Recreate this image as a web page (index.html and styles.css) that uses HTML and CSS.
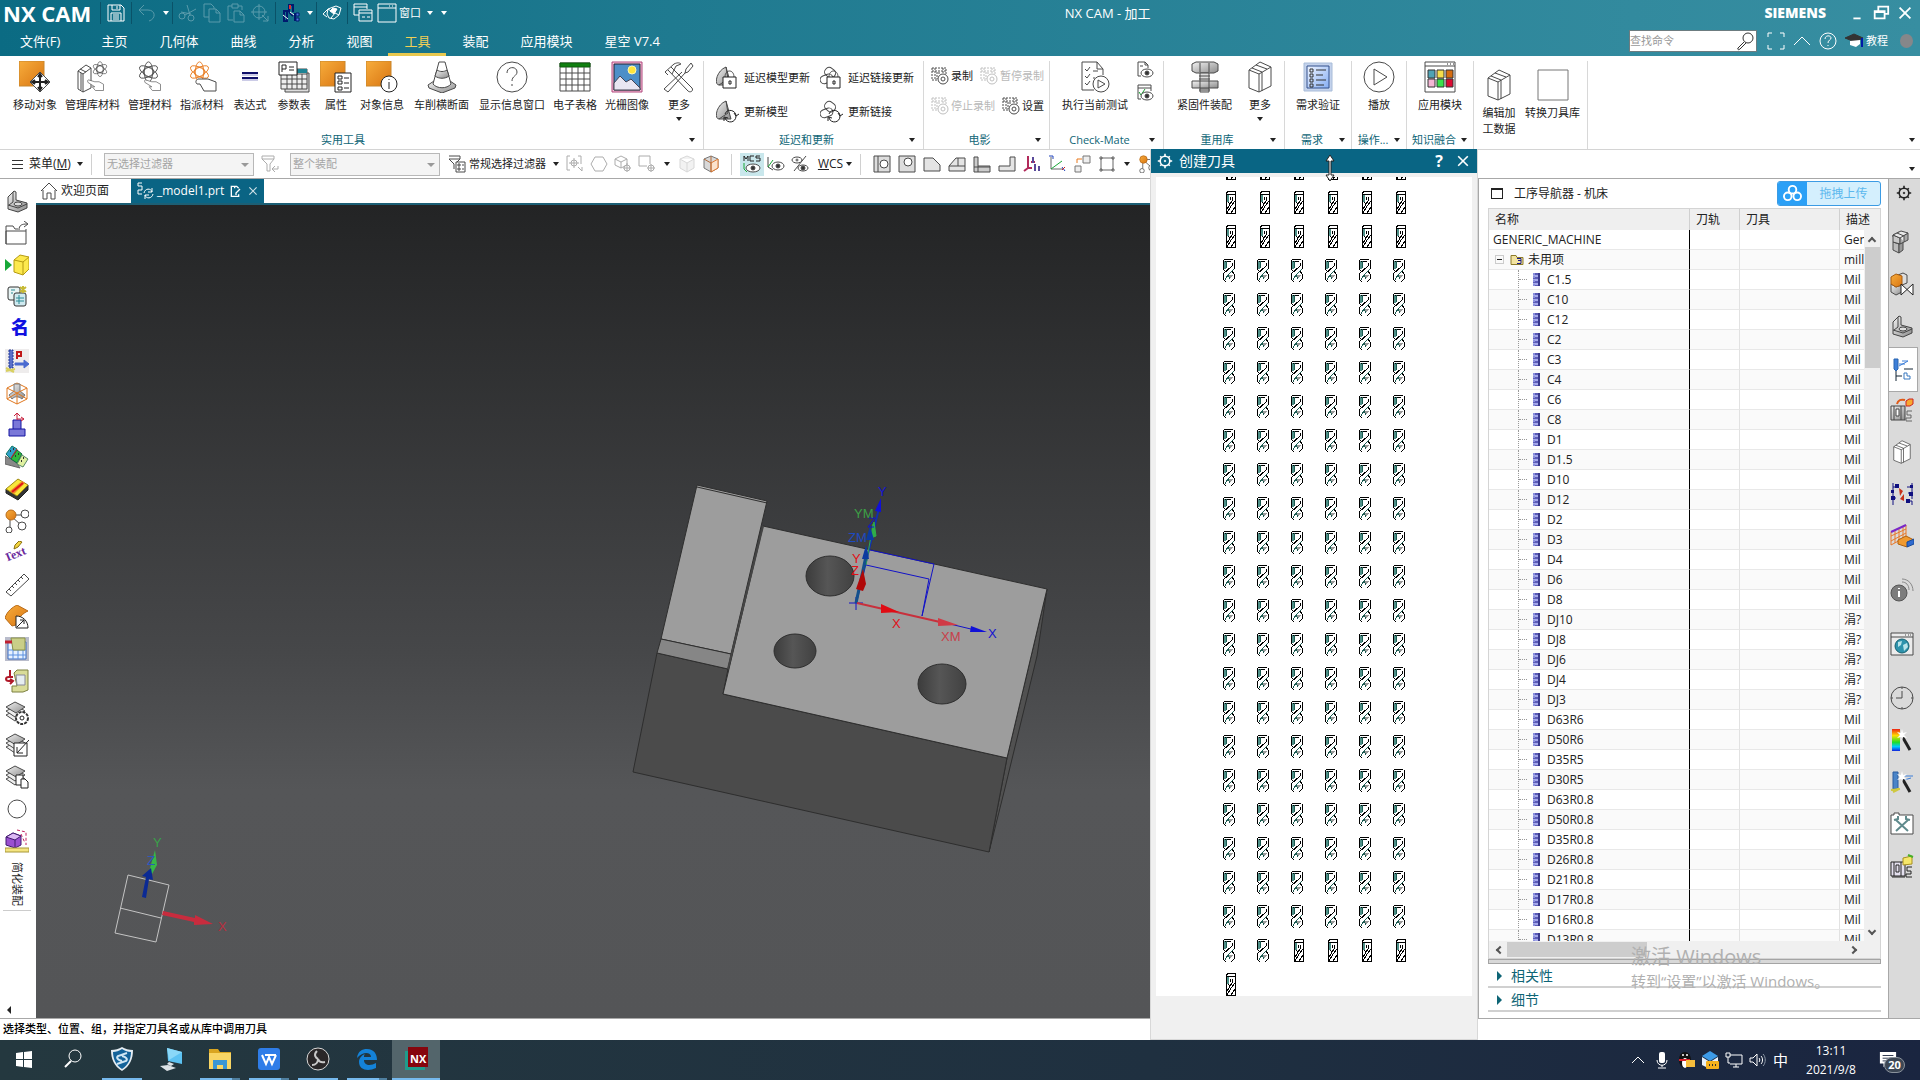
FILE: index.html
```
<!DOCTYPE html>
<html lang="zh-CN">
<head>
    <meta charset="UTF-8">
    <meta name="viewport" content="width=device-width, initial-scale=1.0">
    <title>NX CAM - 加工</title>
    <link rel="stylesheet" href="styles.css">
</head>
<body>
    <!-- icon set -->
    <svg class="sprite" aria-hidden="true">
        <defs>
            <linearGradient id="orange" x1="0" y1="0" x2="1" y2="1"><stop offset="0" stop-color="#f7ad3c"/><stop offset="1" stop-color="#d97512"/></linearGradient>
            <linearGradient id="steel" x1="0" y1="0" x2="1" y2="1"><stop offset="0" stop-color="#f2f2f2"/><stop offset="1" stop-color="#8c8c8c"/></linearGradient>
            <linearGradient id="bluebox" x1="0" y1="0" x2="1" y2="1"><stop offset="0" stop-color="#eef4ff"/><stop offset="1" stop-color="#86aef2"/></linearGradient>
            <linearGradient id="rainbow" x1="0" y1="0" x2="0" y2="1"><stop offset="0" stop-color="#e21"/><stop offset=".3" stop-color="#fd0"/><stop offset=".6" stop-color="#2d2"/><stop offset=".8" stop-color="#0cf"/><stop offset="1" stop-color="#12d"/></linearGradient>
        </defs>

        <symbol id="save" viewBox="0 0 20 20"><path d="M2 2h13l3 3v13H2zM6 2v5h8V2M11 3v3M5 18v-8h10v8M7 12h6M7 14h6M7 16h6"/></symbol>
        <symbol id="undo" viewBox="0 0 20 20"><path d="M7 2L2 7l5 5M2 7h9c8 0 8 9 1 11"/></symbol>
        <symbol id="cut" viewBox="0 0 20 20"><path d="M9 2l3 10M18 6L7 12M3 9l10 2"/><circle cx="4" cy="13" r="3"/><circle cx="13" cy="15" r="3"/></symbol>
        <symbol id="copy" viewBox="0 0 20 20"><path d="M7 14H2V1h7l3 3v2M7 6h7l4 4v9H7zM14 6v4h4"/></symbol>
        <symbol id="paste" viewBox="0 0 20 20"><path d="M7 17H2V3h4M12 3h4v4M6 1h6v4H6zM8 8h6l4 4v7H8zM14 8v4h4"/></symbol>
        <symbol id="target" viewBox="0 0 20 20"><circle cx="9" cy="9" r="6"/><path d="M9 1v16M1 9h16M12 12l6 6M18 13v5h-5"/></symbol>
        <symbol id="tree-tool" viewBox="0 0 20 20"><path d="M8 9V2h4v7M3 8v10h3V8zM14 10v8M8 9l4 4" stroke="#001a6e" stroke-width="2"/><path d="M8 2h2v4H8z" fill="#e03030" stroke="none"/><path d="M2 12l5 4M9 9l4 3" stroke="#fff"/><path d="M15 10h3v3h-3zM15 15h3v3h-3z" fill="#4f7be0" stroke="#001a6e"/></symbol>
        <symbol id="touch" viewBox="0 0 20 20"><path d="M1 11l5-5 3 2M6 6l8-3 5 2-2 7-5 4-5-1-2-4z"/><path d="M8 8l3-3 4 1-3 5z" fill="#fff"/><path d="M1 11l4 3M9 15l4-5 4 2"/></symbol>
        <symbol id="cascade" viewBox="0 0 20 20"><path d="M6 12H1V1h13v5M1 4h13M6 7h13v11H6zM6 10h13M9 14h3M14 14h3"/></symbol>
        <symbol id="window" viewBox="0 0 20 20"><path d="M1 1h18v18H1zM1 5h18M12 3h1M15 3h1"/></symbol>
        <symbol id="mag" viewBox="0 0 20 20"><circle cx="12" cy="7" r="5"/><path d="M8 11l-6 6c-1 2 1 2 2 1l6-6"/></symbol>
        <symbol id="fullscreen" viewBox="0 0 20 20"><path d="M2 6V2h4M14 2h4v4M18 14v4h-4M6 18H2v-4"/></symbol>
        <symbol id="caret-up" viewBox="0 0 20 20"><path d="M2 14l8-8 8 8"/></symbol>
        <symbol id="help" viewBox="0 0 20 20"><circle cx="10" cy="10" r="8"/><path d="M7 8c0-4 6-4 6-1 0 2-3 2-3 5M10 14v1"/></symbol>
        <symbol id="hat" viewBox="0 0 20 20"><path d="M1 7l9-4 9 4-8 4z" fill="#333" stroke="#333"/><path d="M6 10v4l6 2 4-3V9z" fill="#fff" stroke="none"/><path d="M18 7v9" stroke="#0018a8" stroke-width="2"/></symbol>
        <symbol id="min" viewBox="0 0 20 20"><path d="M6 16h8" stroke-width="2"/></symbol>
        <symbol id="restore" viewBox="0 0 20 20"><path d="M7 8V3h11v8h-4M3 8h11v8H3zM3 9h11" stroke-width="2"/></symbol>
        <symbol id="close" viewBox="0 0 20 20"><path d="M4 4l12 12M16 4L4 16" stroke-width="2"/></symbol>

        <symbol id="move" viewBox="0 0 32 32"><path d="M0 0h25v25H0z" fill="url(#orange)" stroke="#c8862c"/><path d="M21 11l10 10-10 10-10-10z" fill="#fff"/><path d="M21 14v14M14 21h14M19 16l2-3 2 3M19 26l2 3 2-3M16 19l-3 2 3 2M26 19l3 2-3 2" stroke="#222" stroke-width="2"/></symbol>
        <symbol id="atom" viewBox="0 0 32 32"><circle cx="16" cy="13" r="6"/><ellipse cx="16" cy="13" rx="5" ry="12"/><ellipse cx="16" cy="13" rx="5" ry="12" transform="rotate(60 16 13)"/><ellipse cx="16" cy="13" rx="5" ry="12" transform="rotate(120 16 13)"/></symbol>
        <symbol id="hand" viewBox="0 0 32 32"><path d="M4 11l10 3h7l7 4v10H15l-5-6 4 0-11-7c-1-3 0-4 1-4z" fill="#fff"/></symbol>
        <symbol id="mat-lib" viewBox="0 0 32 32"><path d="M1 10l8-6 5 3v20l-8 4-5-3zM1 10l5 3 8-6M6 13v18M3 8l6 3M4 12v17" fill="#fff"/><use href="#atom" x="13" y="0" width="20" height="20"/><use href="#hand" x="7" y="12" width="24" height="20"/></symbol>
        <symbol id="mat" viewBox="0 0 32 32"><use href="#atom" x="1" y="0" width="27" height="27"/><use href="#hand" x="7" y="12" width="24" height="20"/></symbol>
        <symbol id="mat-assign" viewBox="0 0 32 32"><g stroke="#e8791c"><use href="#atom" x="0" y="0" width="27" height="27"/></g><path d="M12 18h10l8 3v9H18l-4-7h-3c-2-2-1-4 1-5z" fill="#fff"/></symbol>
        <symbol id="equal" viewBox="0 0 32 32"><path d="M8 12h16M8 17h16" stroke="#10106a" stroke-width="2"/><path d="M8 14h16M8 19h16" stroke="#9a9ad0"/></symbol>
        <symbol id="param" viewBox="0 0 32 32"><path d="M7 12h24v19H7z" fill="#ddd"/><path d="M3 8h26v20H3z" fill="#eee"/><path d="M19 8h10v4H19z" fill="#1d8394" stroke="none"/><path d="M3 13h26M3 18h26M3 23h26M9 13v15M14 13v15M19 8v20M24 13v15"/><path d="M1 1h18v13H1z" fill="#fff" stroke="#222"/><path d="M4 11V4h4v4H4M11 6h5M11 9h5" stroke="#222"/></symbol>
        <symbol id="prop" viewBox="0 0 32 32"><path d="M0 0h25v25H0z" fill="url(#orange)" stroke="#c8862c"/><path d="M15 12h16v19H15z" fill="#fff" stroke="#222"/><path d="M18 15h4v3h-4zM18 20h4v3h-4zM18 26h4v3h-4zM24 17h5M24 22h5M24 27h5" stroke="#222"/></symbol>
        <symbol id="info" viewBox="0 0 32 32"><path d="M0 0h25v25H0z" fill="url(#orange)" stroke="#c8862c"/><circle cx="23" cy="23" r="8" fill="#fff" stroke="#222"/><path d="M23 21v7M23 18v1" stroke="#222"/></symbol>
        <symbol id="cone" viewBox="0 0 32 32"><path d="M2 24l6-4 16 0 6 4-1 3-13 5-13-5z" fill="url(#steel)"/><path d="M13 1h6l6 22c-4 5-14 5-18 0z" fill="#fff"/><path d="M11 9c3 2 7 2 10 0l2 6c-4 3-10 3-14 0z" fill="url(#steel)"/></symbol>
        <symbol id="help-lg" viewBox="0 0 32 32"><circle cx="16" cy="16" r="15"/><path d="M11 12c0-7 10-7 10-1 0 4-5 4-5 9M16 23v2"/></symbol>
        <symbol id="sheet" viewBox="0 0 32 32"><path d="M1 2h30v28H1z" fill="#fff"/><path d="M1 2h30v4H1z" fill="#108010" stroke="#0c5c0c"/><path d="M1 12h30M1 18h30M1 24h30M7 6v24M13 6v24M19 6v24M25 6v24"/></symbol>
        <symbol id="picture" viewBox="0 0 32 32"><path d="M1 1h30v30H1z" fill="#f8c4dc" stroke="#b0487c"/><path d="M3 3h26v26H3z" fill="#4d8fc8" stroke="#223"/><circle cx="21" cy="9" r="4" fill="#ffe53b" stroke="#fff7b0"/><path d="M3 29v-7l6-7 6 6 5-3 9 9v2z" fill="#e8e6f2" stroke="#445"/></symbol>
        <symbol id="wrench" viewBox="0 0 32 32"><path d="M8 6L29 27c2 3-2 5-4 3L5 9M2 11l9-8c4-2 6-1 7 0l-5 2-4 8M2 11l3 3M28 2l2 3-5 6-3 1 1-4zM22 12L5 31l-4-3L19 11" fill="#fff"/></symbol>
        <symbol id="part" viewBox="0 0 24 24"><path d="M3 16V8l6-6 2 1v8l11 3v5l-9 4-10-3z" fill="url(#steel)" stroke="#444"/><path d="M3 16l10 3 9-4M8 3v10l-4 3" stroke="#444"/><ellipse cx="13" cy="15" rx="4" ry="2" fill="#ddd" stroke="#444"/></symbol>
        <symbol id="wedge" viewBox="0 0 24 24"><path d="M10 1C0 5-2 19 3 19h12z" fill="url(#steel)"/><path d="M10 1l2 12-9 6"/></symbol>
        <symbol id="lock" viewBox="0 0 24 24"><path d="M9 11c0-8 9-8 9 0"/><path d="M7 11h13v11H7z" fill="#fff" stroke="#222"/><path d="M13 15h2v3h-2z" stroke="#222"/></symbol>
        <symbol id="refresh" viewBox="0 0 24 24"><path d="M9 14c2-6 11-4 11 2 0 7-9 8-11 2M18 13l2 3 3-2M8 21v-4l4 1" stroke="#222"/></symbol>
        <symbol id="model-lock" viewBox="0 0 24 24"><use href="#wedge"/><use href="#lock"/></symbol>
        <symbol id="model-up" viewBox="0 0 24 24"><use href="#wedge"/><use href="#refresh"/></symbol>
        <symbol id="links" viewBox="0 0 24 24"><rect x="0" y="9" width="13" height="8" rx="4" transform="rotate(-20 6 13)" fill="#fff"/><rect x="5" y="2" width="11" height="9" rx="4" transform="rotate(40 10 6)" fill="none"/></symbol>
        <symbol id="link-lock" viewBox="0 0 24 24"><use href="#links"/><use href="#lock"/></symbol>
        <symbol id="link-up" viewBox="0 0 24 24"><use href="#links"/><use href="#refresh"/></symbol>
        <symbol id="film" viewBox="0 0 18 18"><path d="M1 1h14v7M1 1v12h5M1 4h14M4 1v12M12 1v6M6 5v7M8 5v2" stroke-dasharray="2 1"/><circle cx="12" cy="12" r="5" fill="#fff"/><circle cx="12" cy="12" r="2"/></symbol>
        <symbol id="checkdoc" viewBox="0 0 32 32"><path d="M15 29H3V1h15l6 7v6M18 1v7h6M6 8l2 2 3-4M6 15l2 2 3-4M6 22l2 2 3-4M14 10h5M14 17h2"/><circle cx="22" cy="23" r="8" fill="#fff"/><path d="M19 19l7 4-7 4z"/></symbol>
        <symbol id="doc-eye" viewBox="0 0 18 18"><path d="M5 15H2V1h7l3 3v3M9 1v3h3M4 5h3"/><ellipse cx="11" cy="12" rx="6" ry="4" fill="#fff"/><circle cx="11" cy="12" r="2" fill="#333"/></symbol>
        <symbol id="win-eye" viewBox="0 0 18 18"><path d="M5 15H2V1h13v6M2 4h13"/><path d="M3 8l2 3 4-6" stroke="#18a030"/><ellipse cx="11" cy="12" rx="6" ry="4" fill="#fff"/><circle cx="11" cy="12" r="2" fill="#333"/></symbol>
        <symbol id="bolt" viewBox="0 0 32 32"><path d="M3 3l4-2h18l4 2v7l-4 2H7l-4-2z" fill="url(#steel)"/><path d="M11 2v9M20 2v9M11 12h9v9h-9zM11 27h9v4h-9z" fill="#ddd"/><path d="M3 20h26v7H3z" fill="url(#steel)"/><path d="M10 15h11M10 18h11M10 29h11M11 20v7M20 20v7"/></symbol>
        <symbol id="book" viewBox="0 0 32 32"><path d="M5 9L16 1l11 5v19l-12 6-10-4zM5 9l10 4v18M15 13l12-7M8 7l10 4M12 4l11 4M18 11v19" fill="#fff"/></symbol>
        <symbol id="req" viewBox="0 0 32 32"><path d="M2 2h28v28H2z" fill="#c3d2ec" stroke="#a8bcd8"/><path d="M5 5h22v22H5z" fill="url(#bluebox)" stroke="#33508c"/><path d="M8 8h3v3H8zM8 13h3v3H8zM8 18h3v3H8zM8 23h3v3H8zM14 9h10M14 14h7M14 19h10M14 24h8" stroke="#333"/></symbol>
        <symbol id="play" viewBox="0 0 32 32"><circle cx="16" cy="16" r="15"/><path d="M11 8l13 8-13 8z"/></symbol>
        <symbol id="apps" viewBox="0 0 32 32"><path d="M1 1h30v30H1zM1 5h30" fill="#fff"/><path d="M23 3h1M26 3h1M29 3h1" stroke="#222"/><g stroke="#333"><path d="M4 9h7v8H4z" fill="#4fa3b4"/><path d="M13 9h7v8h-7z" fill="#f5de4b"/><path d="M22 9h7v8h-7z" fill="#d66c10"/><path d="M4 18h7v8H4z" fill="#f4b6d4"/><path d="M13 18h7v8h-7z" fill="#3be04a"/><path d="M22 18h7v8h-7z" fill="#dc0a32"/></g></symbol>
        <symbol id="blank" viewBox="0 0 32 32"><path d="M1 1h30v30H1z" fill="#fff" stroke="#777"/></symbol>

        <symbol id="funnel" viewBox="0 0 18 18"><path d="M1 1h12v3L9 9v7H6V9L1 4zM1 4h12M17 14h-5M14 11l-3 3 3 3M17 14v-3"/></symbol>
        <symbol id="funnel-list" viewBox="0 0 18 18"><path d="M1 1h11v3L9 7M6 14V9L1 4h11"/><path d="M8 7h9v10H8z" fill="#fff"/><path d="M10 9h2v2h-2zM10 13h2v2h-2zM14 10h2M14 14h2"/></symbol>
        <symbol id="snap" viewBox="0 0 18 18"><path d="M4 1H1v14h3M12 1h3v8M8 3v10M3 8h10M12 12l4 4M16 12v4"/><circle cx="8" cy="8" r="3"/></symbol>
        <symbol id="hex" viewBox="0 0 18 18"><path d="M5 2h8l4 7-4 7H5L1 9z"/></symbol>
        <symbol id="cube-t" viewBox="0 0 18 18"><path d="M7 1l6 3v6l-6 3-6-3V4zM1 4l6 3 6-3M7 7v6"/><circle cx="13" cy="13" r="3"/><path d="M13 8v9M9 13h8"/></symbol>
        <symbol id="sq-t" viewBox="0 0 18 18"><path d="M9 11H1V1h11v8"/><circle cx="13" cy="13" r="3"/><path d="M13 9v8M9 13h8"/></symbol>
        <symbol id="cube" viewBox="0 0 18 18"><path d="M9 1l7 3v9l-7 4-7-4V4zM2 4l7 4 7-4M9 8v9" fill="#e4e4e4" stroke="#aaa"/></symbol>
        <symbol id="cube-o" viewBox="0 0 18 18"><path d="M9 1l7 3v9l-7 4-7-4V4z" fill="#d8d8d8" stroke="#777"/><path d="M9 8l7-4v9l-7 4z" fill="#fbe3cd" stroke="#e07a30"/><path d="M2 4l7 4v9M9 1v7" stroke="#b06a3a"/></symbol>
        <symbol id="eye-l" viewBox="0 0 18 18"><path d="M1 2v10l5 3" stroke="#444"/><path d="M1 12l5-7" stroke="#1ba838"/><ellipse cx="11" cy="11" rx="6" ry="4" fill="#fff"/><circle cx="11" cy="11" r="2" fill="#333"/></symbol>
        <symbol id="eye-off" viewBox="0 0 18 18"><ellipse cx="6" cy="5" rx="5" ry="3"/><circle cx="6" cy="5" r="1"/><path d="M15 1L3 16"/><ellipse cx="12" cy="13" rx="5" ry="3"/><circle cx="12" cy="13" r="2" fill="#333"/></symbol>
        <symbol id="mcs" viewBox="0 0 18 18"><path d="M1 6V1l2 3 2-3v5M11 1H7v5h4M17 1h-4v2h4v3h-4" stroke="#222"/><ellipse cx="10" cy="13" rx="7" ry="4" fill="#fff"/><circle cx="10" cy="13" r="2" fill="#333"/><path d="M1 8v6l3 3" stroke="#1ba838"/></symbol>
        <symbol id="f1" viewBox="0 0 18 18"><path d="M1 1h16v16H1zM5 1v16" fill="#ddd"/><circle cx="11" cy="9" r="4" fill="#fff"/></symbol>
        <symbol id="f2" viewBox="0 0 18 18"><path d="M1 1h16v16H1z" fill="#ddd"/><circle cx="10" cy="7" r="4" fill="#fff"/></symbol>
        <symbol id="f3" viewBox="0 0 18 18"><path d="M1 3h9l7 7v6H1z" fill="#e4e4e4"/></symbol>
        <symbol id="f4" viewBox="0 0 18 18"><path d="M1 16v-5l7-8h9v13zM1 11h16M10 3v8" fill="#e4e4e4"/></symbol>
        <symbol id="f5" viewBox="0 0 18 18"><path d="M1 2h4v9h12v6H1zM1 12h16M5 11v6" fill="#ccc"/></symbol>
        <symbol id="f6" viewBox="0 0 18 18"><path d="M17 2h-5v9H1v5h16z" fill="#e4e4e4"/></symbol>
        <symbol id="f7" viewBox="0 0 18 18"><path d="M5 1v12h4M5 13l-4 3M8 7h4" stroke="#b22a5b" stroke-width="2"/><path d="M10 2v6M12 9v7M16 11v5" stroke="#5a4a9a" stroke-width="2"/></symbol>
        <symbol id="f8" viewBox="0 0 18 18"><path d="M3 2v12h12" stroke="#666"/><path d="M3 14L14 6" stroke="#1ba838"/><path d="M1 1h4v3M14 12l3 4" stroke="#2244bb"/><path d="M14 15l3-3" stroke="#c22"/></symbol>
        <symbol id="f9" viewBox="0 0 18 18"><path d="M10 1h7v7h-7zM2 11h6v6H2z" fill="#eee" stroke="#777"/><path d="M4 8V4h5" stroke="#e8791c"/></symbol>
        <symbol id="f10" viewBox="0 0 18 18"><path d="M3 3h12v12H3zM2 2h2v2H2zM14 2h2v2h-2zM2 14h2v2H2zM14 14h2v2h-2z" stroke="#666"/></symbol>
        <symbol id="nodes" viewBox="0 0 24 24"><path d="M6 7l10 9M5 8v10M8 6h10"/><circle cx="6" cy="6" r="5" fill="url(#orange)" stroke="#b86a18"/><circle cx="20" cy="5" r="4" fill="#fff"/><circle cx="17" cy="17" r="4" fill="#fff"/><circle cx="4" cy="21" r="3" fill="#fff"/></symbol>
        <symbol id="home" viewBox="0 0 18 18"><path d="M1 9l8-8 8 8M3 8v9h4v-6h4v6h4V8"/></symbol>
        <symbol id="sync" viewBox="0 0 18 18"><path d="M6 1H2v3h4v4H2M2 8v4h4M8 11c1-5 7-5 8-1M16 6v4h-4M17 12c-1 5-7 5-8 1M9 17v-4h4"/></symbol>
        <symbol id="editdoc" viewBox="0 0 18 18"><path d="M13 14v3H2V2h8l3 3M7 2v3M15 6l-6 6v3" stroke-width="2"/></symbol>
        <symbol id="gear" viewBox="0 0 20 20"><circle cx="10" cy="10" r="6" stroke-width="2"/><circle cx="10" cy="10" r="1" fill="currentColor"/><path d="M10 1v3M10 16v3M1 10h3M16 10h3M4 4l2 2M14 14l2 2M16 4l-2 2M4 16l2-2" stroke-width="2"/></symbol>

        <symbol id="folder-out" viewBox="0 0 24 24"><path d="M1 23V5h7l2 3h3M1 10h20v13H1zM21 10V8M14 9c0-5 3-6 8-6M19 0l4 3-4 3"/></symbol>
        <symbol id="cube-y" viewBox="0 0 24 24"><path d="M0 6l7 6-7 6z" fill="#18a838" stroke="none"/><path d="M9 7l6-5 9 2v12l-6 6-9-3z" fill="#fde94e" stroke="#b59a12"/><path d="M9 7l9 2 6-5M18 9v13" stroke="#b59a12"/></symbol>
        <symbol id="calc" viewBox="0 0 24 24"><rect x="3" y="2" width="12" height="13" rx="2" fill="#e8f4f4" stroke="#333"/><rect x="9" y="8" width="12" height="13" rx="2" fill="#cfeaf0" stroke="#333"/><path d="M11 13h8M11 16h8M14 10v9M6 5h4M6 8h2" stroke="#2a8a94"/><path d="M18 1v7M15 2l6 5M21 2l-6 5" stroke="#c6b934" stroke-width="2"/></symbol>
        <symbol id="point" viewBox="0 0 24 24"><path d="M0 0h24v24H0z" fill="#eeecec" stroke="none"/><path d="M4 1h4v18H4z" fill="#5a70c8" stroke="#223a9a" stroke-dasharray="2 1"/><path d="M12 10V3h4v4h-4" stroke="#c01818" stroke-width="2"/><path d="M10 14h9v-3l5 4-5 4v-3h-9z" fill="#4a6ad0" stroke="#4a6ad0"/><path d="M1 19l8 4M1 22l9-2" stroke="#d8d060" stroke-width="2"/></symbol>
        <symbol id="cage" viewBox="0 0 24 24"><path d="M12 2l10 5v11l-10 5-10-5V7z" stroke="#e07820"/><path d="M9 3h6v7l5 4-3 4c-4-3-7-3-10 0l-3-4 5-4z" fill="url(#steel)" stroke="#777"/><path d="M2 18l10-6 10 6M12 12v11M2 7l10 5 10-5" stroke="#e07820"/></symbol>
        <symbol id="stamp" viewBox="0 0 24 24"><path d="M8 7h8v9h4v7H4v-7h4zM8 16h8" fill="#7a78d8" stroke="#1414a0"/><path d="M12 7V1M9 3l3-3 3 3M12 6h7M16 4l3 2-3 2" stroke="#c8203c"/></symbol>
        <symbol id="stack-g" viewBox="0 0 24 24"><path d="M0 11v8l15 4-4-6z" fill="#888" stroke="#666"/><path d="M1 9l6-8 5 3-6 10z" fill="#2f9fc8" stroke="#176"/><path d="M6 14l6-9 5 4-5 9z" fill="#2fb83a" stroke="#164"/><path d="M12 19l5-9 6 4-5 8z" fill="#e0f0a0" stroke="#586"/><path d="M6 13l6-9" stroke="#c22"/><path d="M5 6h1M8 4h1M10 11h1M13 9h1M16 16h1M18 13h1" stroke="#333" stroke-width="2"/></symbol>
        <symbol id="stripes" viewBox="0 0 24 24"><path d="M1 12v4l12 7 10-10V8L12 19z" fill="#333" stroke="#222"/><path d="M1 12L13 2l10 6-11 11z" fill="#f8e83a" stroke="#a08a10"/><path d="M5 14L17 4l3 2L9 17z" fill="#f08a28" stroke="none"/><path d="M7 15L18 6" stroke="#e01818" stroke-width="2"/></symbol>
        <symbol id="text-edit" viewBox="0 0 24 24"><path d="M9 8l1-4 4-4 3 1-4 5z" fill="#f2d440" stroke="#8a7010"/><text x="1" y="21" class="text-ico" transform="rotate(-22 1 21)">Text</text></symbol>
        <symbol id="ruler" viewBox="0 0 24 24"><path d="M1 19L19 1l5 5L6 23zM4 16l2 2M7 13l2 2M10 10l2 2M13 7l2 2M16 4l2 2" fill="#fff"/></symbol>
        <symbol id="angle" viewBox="0 0 24 24"><path d="M0 13C2 6 8 2 12 0l11 6c-5 2-11 8-12 14l-4 1z" fill="url(#orange)" stroke="#b86a18"/><path d="M11 23V11c7 0 12 5 12 12z" fill="#fff" stroke="#222"/><path d="M12 22l7-7M15 15h4v4" stroke="#222"/></symbol>
        <symbol id="grid-b" viewBox="0 0 24 24"><path d="M0 0h24v24H0z" fill="#b9bccb" stroke="none"/><path d="M3 5h18v17H3z" fill="#e6f1ff" stroke="#3c6cc0"/><path d="M3 13h18M3 18h18M8 5v17M13 5v17M18 5v17" stroke="#5b90e0"/><path d="M6 1h14v12H8z" fill="#c9ce88" stroke="#8c9248"/><path d="M0 5h7" stroke="#c02030" stroke-width="3"/></symbol>
        <symbol id="mach" viewBox="0 0 24 24"><path d="M9 4l3-3h11v20l-5 2H7v-6h5z" fill="#d9dc98" stroke="#7c8040"/><path d="M11 6h9v10h-8z" fill="#e6eef0" stroke="#889"/><path d="M5 1v6M8 8H4c-4 0-4 4 0 4h3M5 10l3 2-3 3" stroke="#b01828" stroke-width="2"/></symbol>
        <symbol id="layers" viewBox="0 0 24 24"><path d="M1 14l4-2h12l3 2-10 6z" fill="#eee"/><path d="M1 10l4-2h12l3 2-10 6z" fill="#eee"/><path d="M1 6l9-5 10 5-9 6z" fill="url(#steel)"/></symbol>
        <symbol id="layers-gear" viewBox="0 0 24 24"><use href="#layers"/><circle cx="17" cy="17" r="6" fill="#fff" stroke="#333" stroke-dasharray="3 1" stroke-width="2"/><circle cx="17" cy="17" r="2" stroke="#222"/></symbol>
        <symbol id="layers-in" viewBox="0 0 24 24"><use href="#layers"/><path d="M9 10h13v13H9z" fill="#fff" stroke="#222"/><path d="M24 7L12 20M12 14v6h6" stroke="#222"/></symbol>
        <symbol id="layers-copy" viewBox="0 0 24 24"><use href="#layers"/><path d="M11 10h7v10h-7z" fill="#fff" stroke="#222"/><path d="M16 14h4l3 3v6h-7z" fill="#fff" stroke="#222"/></symbol>
        <symbol id="ring" viewBox="0 0 24 24"><circle cx="12" cy="12" r="9"/></symbol>
        <symbol id="cube-p" viewBox="0 0 24 24"><path d="M1 8l7-4 8 3v9l-6 3-9-3z" fill="#9a50d0" stroke="#421a70"/><path d="M1 8l7-4 8 3-6 4z" fill="#dcb8f4" stroke="#421a70"/><path d="M10 11v8" stroke="#421a70"/><path d="M0 19h24v4H0z" fill="#f4e480" stroke="#a89838"/><path d="M12 1l9 2v13M16 5l4 9" stroke="#c22060" stroke-dasharray="3 2"/></symbol>

        <symbol id="asm" viewBox="0 0 24 24"><path d="M3 12l6 2v9l-6-3z" fill="#bbb"/><path d="M9 14l4-2v8l-4 3z" fill="#999"/><path d="M3 5l6-3 8 3-4 3-10-1z" fill="#eee"/><path d="M3 5l7 3v6l-7-2z" fill="#c8c8c8"/><path d="M10 8l8-5v7l-8 4z" fill="#aaa"/><path d="M3 5l8-4 7 2-8 5zM7 3l7 3v6" fill="#e8e8e8"/></symbol>
        <symbol id="asm-o" viewBox="0 0 24 24"><path d="M1 12l5 3 6-2v7l-6 3-5-3z" fill="url(#steel)"/><path d="M8 3l5-2 4 2v8l-5 2z" fill="#ddd"/><path d="M1 5l5-3 6 2v9l-6 2-5-3z" fill="url(#orange)" stroke="#a85c10"/><path d="M11 12l12 11V12L11 23z" fill="#fff" stroke="#222"/></symbol>
        <symbol id="opnav" viewBox="0 0 24 24"><path d="M4 1h4v10l-2 2-2-2z" fill="#3c7ed8" stroke="#2864b0"/><path d="M9 6h6M9 8l9-5M12 3h6" stroke="#3c7ed8"/><path d="M6 13v10M6 18h6M14 11h9" stroke="#123"/><path d="M14 15h3v3h3v3h-6z" stroke="#3878c0"/></symbol>
        <symbol id="cnc" viewBox="0 0 24 24"><path d="M1 8h14v14H1z" fill="url(#steel)" stroke="#444"/><path d="M4 8v14M11 8v14M6 11h3v7H6z" fill="#fff" stroke="#444"/><path d="M22 13h-5v4h4v3h-5v3h6" stroke="#666"/><path d="M7 6c1-4 4-5 8-4" stroke="#e05a18" stroke-width="2"/><path d="M16 3l3-2h4v5l-3 2h-4z" fill="#f8a830" stroke="#c22"/></symbol>
        <symbol id="chain" viewBox="0 0 24 24"><path d="M3 1v22M3 5h5M3 16h3M22 1v16M22 5h-5M22 19h-4M22 19v4M18 11h4" stroke="#101080"/><path d="M5 2h4v4H5zM1 8h3v3H1zM1 14h4v4H1zM20 3h3v3h-3zM19 10h4v4h-4zM16 17h4v4h-4z" fill="#101080" stroke="none"/><path d="M9 6l4 3-3 5zM14 12l-4 5 4 2z" fill="#c83018" stroke="none"/></symbol>
        <symbol id="mesh" viewBox="0 0 24 24"><path d="M1 8L16 1v12L1 21zM1 12l15-7M1 17l15-8M5 6v13M9 4v13M13 3v11" stroke="#e8792a"/><path d="M1 8L16 1" stroke="#7a28c8" stroke-width="2"/><path d="M8 16l8-4 8 4-7 7-9-3z" fill="#f09a30" stroke="#b06010"/><path d="M17 23v-5l7-3v5z" fill="#2e6ad0" stroke="#184a98"/></symbol>
        <symbol id="infob" viewBox="0 0 24 24"><circle cx="9" cy="15" r="8" fill="#7c7c7c" stroke="#555"/><path d="M9 13v6M9 10v1" stroke="#fff" stroke-width="2"/><path d="M12 4c4 0 7 3 7 8M12 1c6 0 11 5 11 12" stroke="#888"/></symbol>
        <symbol id="web" viewBox="0 0 24 24"><path d="M1 1h22v22H1zM1 5h22M15 3h1M18 3h1M20 3h1" fill="#ececec"/><circle cx="12" cy="14" r="7" fill="#2e93ac" stroke="#16606f"/><path d="M8 10l4-1-1 4-3 2zM13 13l4-2 1 4-4 4z" fill="#b9e4ea" stroke="none"/></symbol>
        <symbol id="clock" viewBox="0 0 24 24"><circle cx="12" cy="12" r="11"/><path d="M12 5v7H6M12 1v2M12 21v2M1 12h2M21 12h2"/></symbol>
        <symbol id="wand" viewBox="0 0 24 24"><path d="M12 8l8 14" stroke="#222" stroke-width="3"/><path d="M12 1l1 4 4-1-3 3 3 3-4-1-1 4-1-4-4 1 3-3-3-3 4 1z" fill="#fff" stroke="none"/></symbol>
        <symbol id="color-wand" viewBox="0 0 24 24"><path d="M2 1h8v22H2z" fill="url(#rainbow)" stroke="none"/><use href="#wand"/></symbol>
        <symbol id="op-wand" viewBox="0 0 24 24"><path d="M3 2h5v17H3z" fill="#4a84c8" stroke="#2a5ca0"/><path d="M12 6h11M14 10l7-2" stroke="#3c7ed8"/><path d="M1 20l9-1M3 22l6-3" stroke="#cfc840" stroke-width="2"/><use href="#wand"/></symbol>
        <symbol id="toolbox" viewBox="0 0 24 24"><path d="M1 3h3V1h5v2h14v19H1z" fill="#fff"/><path d="M6 8l12 11M18 8L6 19M4 8l4-1 0-3M20 8l-4-1 0-3" stroke="#5f8a8c" stroke-width="2"/></symbol>
        <symbol id="cnc-open" viewBox="0 0 24 24"><path d="M1 8h14v14H1zM4 8v14M11 8v14M6 11h3v7H6z" fill="#e4e0ee" stroke="#222"/><path d="M22 13h-5v4h4v3h-5v3h6M2 23h13" stroke="#222"/><path d="M13 4l9-2v8l-9 1z" fill="#f6e76a" stroke="#a89020"/><path d="M18 1l5 2" stroke="#48b028" stroke-width="2"/></symbol>

        <!-- cutting tools -->
        <symbol id="drill" viewBox="0 0 24 24"><path d="M5 2h2v-1h9v1h1v9l-2 2 2 3v5l-3 3H9l-3-3v-5l2-3-3-2z" fill="#fff" stroke="none"/><path d="M6 3h3v8H6z" fill="#4f9088" stroke="none"/><path d="M12 17h4l-3 4z" fill="#999" stroke="none"/><path d="M7 1h9M6 2v9l2 2M17 2v9l-2 2 2 3v5l-3 3H9l-3-3v-5l9-8 1-3M8 3h6" stroke="#000"/><path d="M17 11l-6 6-3 5M11 17l2 4M9 3v7" stroke="#1d5c52"/></symbol>
        <symbol id="mill" viewBox="0 0 24 24"><path d="M9 2h1v-1h8v22H9z" fill="#fff" stroke="#000"/><path d="M10 5h2v7h-2z" fill="#4f9088" stroke="none"/><path d="M18 2v21M10 4h8M13 7v3M16 7l-1 4-5 8M18 11l-4 5-4 7M18 17l-4 6M11 12l2 2" stroke="#000"/></symbol>
    </svg>

    <header class="app-head">
        <div class="title-bar">
            <span class="brand">NX CAM</span>
            <i class="tsep"></i>
            <button class="tb" aria-label="保存"><svg class="ico"><use href="#save"/></svg></button>
            <i class="tsep"></i>
            <button class="tb dim" aria-label="撤销"><svg class="ico"><use href="#undo"/></svg></button>
            <i class="arrow light"></i>
            <i class="tsep"></i>
            <button class="tb dim" aria-label="剪切"><svg class="ico"><use href="#cut"/></svg></button>
            <button class="tb dim" aria-label="复制"><svg class="ico"><use href="#copy"/></svg></button>
            <button class="tb dim" aria-label="粘贴"><svg class="ico"><use href="#paste"/></svg></button>
            <button class="tb dim" aria-label="定位"><svg class="ico"><use href="#target"/></svg></button>
            <i class="tsep"></i>
            <button class="tb" aria-label="刀具"><svg class="ico"><use href="#tree-tool"/></svg></button>
            <i class="arrow light"></i>
            <i class="tsep"></i>
            <button class="tb" aria-label="触控"><svg class="ico"><use href="#touch"/></svg></button>
            <i class="tsep"></i>
            <button class="tb" aria-label="切换窗口"><svg class="ico"><use href="#cascade"/></svg></button>
            <button class="tb win"><svg class="ico"><use href="#window"/></svg>窗口</button>
            <i class="arrow light"></i>
            <i class="arrow light over"></i>
            <h1 class="title">NX CAM - 加工</h1>
            <span class="siemens">SIEMENS</span>
            <button class="tb wc" aria-label="最小化"><svg class="ico"><use href="#min"/></svg></button>
            <button class="tb wc" aria-label="还原"><svg class="ico"><use href="#restore"/></svg></button>
            <button class="tb wc" aria-label="关闭"><svg class="ico"><use href="#close"/></svg></button>
        </div>
        <nav class="menu-bar">
            <a class="file" href="#">文件(F)</a>
            <a href="#">主页</a>
            <a href="#">几何体</a>
            <a href="#">曲线</a>
            <a href="#">分析</a>
            <a href="#">视图</a>
            <a class="on" href="#">工具</a>
            <a href="#">装配</a>
            <a href="#">应用模块</a>
            <a href="#">星空 V7.4</a>
            <div class="menu-right">
                <label class="search"><input type="text" placeholder="查找命令" aria-label="查找命令"><svg class="ico"><use href="#mag"/></svg></label>
                <button class="tb" aria-label="全屏"><svg class="ico"><use href="#fullscreen"/></svg></button>
                <button class="tb" aria-label="收起功能区"><svg class="ico"><use href="#caret-up"/></svg></button>
                <button class="tb" aria-label="帮助"><svg class="ico"><use href="#help"/></svg></button>
                <button class="tb tut"><svg class="ico"><use href="#hat"/></svg>教程</button>
                <i class="dot"></i>
            </div>
        </nav>
    </header>

    <section class="ribbon">
        <div class="group g-util">
            <div class="items">
                <button class="big"><svg class="ico"><use href="#move"/></svg>移动对象</button>
                <button class="big"><svg class="ico"><use href="#mat-lib"/></svg>管理库材料</button>
                <button class="big"><svg class="ico"><use href="#mat"/></svg>管理材料</button>
                <button class="big"><svg class="ico"><use href="#mat-assign"/></svg>指派材料</button>
                <button class="big"><svg class="ico"><use href="#equal"/></svg>表达式</button>
                <button class="big"><svg class="ico"><use href="#param"/></svg>参数表</button>
                <button class="big narrow"><svg class="ico"><use href="#prop"/></svg>属性</button>
                <button class="big"><svg class="ico"><use href="#info"/></svg>对象信息</button>
                <button class="big wide"><svg class="ico"><use href="#cone"/></svg>车削横断面</button>
                <button class="big"><svg class="ico"><use href="#help-lg"/></svg>显示信息窗口</button>
                <button class="big"><svg class="ico"><use href="#sheet"/></svg>电子表格</button>
                <button class="big"><svg class="ico"><use href="#picture"/></svg>光栅图像</button>
                <button class="big more"><svg class="ico"><use href="#wrench"/></svg>更多<i class="arrow"></i></button>
            </div>
            <div class="caption"><span>实用工具</span><i class="arrow"></i></div>
        </div>
        <div class="group g-delay">
            <div class="items rows">
                <button class="mid"><svg class="ico"><use href="#model-lock"/></svg>延迟模型更新</button>
                <button class="mid"><svg class="ico"><use href="#link-lock"/></svg>延迟链接更新</button>
                <button class="mid"><svg class="ico"><use href="#model-up"/></svg>更新模型</button>
                <button class="mid"><svg class="ico"><use href="#link-up"/></svg>更新链接</button>
            </div>
            <div class="caption"><span>延迟和更新</span><i class="arrow"></i></div>
        </div>
        <div class="group g-film">
            <div class="items film">
                <div class="line">
                    <button class="small"><svg class="ico"><use href="#film"/></svg>录制</button>
                    <button class="small" disabled><svg class="ico"><use href="#film"/></svg>暂停录制</button>
                </div>
                <div class="line">
                    <button class="small" disabled><svg class="ico"><use href="#film"/></svg>停止录制</button>
                    <button class="small"><svg class="ico"><use href="#film"/></svg>设置</button>
                </div>
            </div>
            <div class="caption"><span>电影</span><i class="arrow"></i></div>
        </div>
        <div class="group g-check">
            <div class="items">
                <button class="big"><svg class="ico"><use href="#checkdoc"/></svg>执行当前测试</button>
                <div class="pair">
                    <button aria-label="查看结果"><svg class="ico"><use href="#doc-eye"/></svg></button>
                    <button aria-label="显示窗口"><svg class="ico"><use href="#win-eye"/></svg></button>
                </div>
            </div>
            <div class="caption"><span>Check-Mate</span><i class="arrow"></i></div>
        </div>
        <div class="group g-reuse">
            <div class="items">
                <button class="big"><svg class="ico"><use href="#bolt"/></svg>紧固件装配</button>
                <button class="big"><svg class="ico"><use href="#book"/></svg>更多<i class="arrow"></i></button>
            </div>
            <div class="caption"><span>重用库</span><i class="arrow"></i></div>
        </div>
        <div class="group g-req">
            <div class="items"><button class="big"><svg class="ico"><use href="#req"/></svg>需求验证</button></div>
            <div class="caption"><span>需求</span><i class="arrow"></i></div>
        </div>
        <div class="group g-play">
            <div class="items"><button class="big"><svg class="ico"><use href="#play"/></svg>播放</button></div>
            <div class="caption"><span>操作...</span><i class="arrow"></i></div>
        </div>
        <div class="group g-know">
            <div class="items"><button class="big"><svg class="ico"><use href="#apps"/></svg>应用模块</button></div>
            <div class="caption"><span>知识融合</span><i class="arrow"></i></div>
        </div>
        <div class="group g-lib">
            <div class="items">
                <button class="big"><svg class="ico"><use href="#book"/></svg>编辑加<br>工数据</button>
                <button class="big"><svg class="ico"><use href="#blank"/></svg>转换刀具库</button>
            </div>
        </div>
        <i class="arrow ribbon-end"></i>
    </section>

    <section class="filter-bar">
        <button class="fmenu"><i class="burger"></i>菜单(<u>M</u>)<i class="arrow"></i></button>
        <i class="fsep"></i>
        <label class="pick"><select disabled aria-label="选择过滤器"><option>无选择过滤器</option></select></label>
        <button class="fb dim" aria-label="重置过滤器"><svg class="ico"><use href="#funnel"/></svg></button>
        <label class="pick"><select disabled aria-label="选择范围"><option>整个装配</option></select></label>
        <button class="ftext"><svg class="ico"><use href="#funnel-list"/></svg>常规选择过滤器<i class="arrow"></i></button>
        <div class="fgroup snaps">
            <button class="fb dim" aria-label="捕捉"><svg class="ico"><use href="#snap"/></svg></button>
            <button class="fb dim" aria-label="多边形"><svg class="ico"><use href="#hex"/></svg></button>
            <button class="fb dim" aria-label="体"><svg class="ico"><use href="#cube-t"/></svg></button>
            <button class="fb dim" aria-label="矩形"><svg class="ico"><use href="#sq-t"/></svg></button>
            <i class="arrow"></i>
            <button class="fb dim" aria-label="着色"><svg class="ico"><use href="#cube"/></svg></button>
            <button class="fb" aria-label="剖切"><svg class="ico"><use href="#cube-o"/></svg></button>
        </div>
        <i class="fsep"></i>
        <div class="fgroup">
            <button class="fb on" aria-label="MCS 显示"><svg class="ico"><use href="#mcs"/></svg></button>
            <button class="fb" aria-label="显示"><svg class="ico"><use href="#eye-l"/></svg></button>
            <button class="fb" aria-label="隐藏"><svg class="ico"><use href="#eye-off"/></svg></button>
            <button class="ftext wcs"><span><u>W</u>CS</span><i class="arrow"></i></button>
        </div>
        <i class="fsep"></i>
        <div class="fgroup feats">
            <button class="fb" aria-label="特征 1"><svg class="ico"><use href="#f1"/></svg></button>
            <button class="fb" aria-label="特征 2"><svg class="ico"><use href="#f2"/></svg></button>
            <button class="fb" aria-label="特征 3"><svg class="ico"><use href="#f3"/></svg></button>
            <button class="fb" aria-label="特征 4"><svg class="ico"><use href="#f4"/></svg></button>
            <button class="fb" aria-label="特征 5"><svg class="ico"><use href="#f5"/></svg></button>
            <button class="fb" aria-label="特征 6"><svg class="ico"><use href="#f6"/></svg></button>
            <button class="fb" aria-label="坐标"><svg class="ico"><use href="#f7"/></svg></button>
            <button class="fb" aria-label="坐标轴"><svg class="ico"><use href="#f8"/></svg></button>
            <button class="fb" aria-label="移动"><svg class="ico"><use href="#f9"/></svg></button>
            <button class="fb" aria-label="框选"><svg class="ico"><use href="#f10"/></svg></button>
            <i class="arrow"></i>
            <button class="fb" aria-label="关联"><svg class="ico"><use href="#nodes"/></svg></button>
        </div>
        <i class="arrow ribbon-end"></i>
    </section>

    <main class="work">
        <aside class="left-bar">
            <button aria-label="部件"><svg class="ico"><use href="#part"/></svg></button>
            <button aria-label="导出"><svg class="ico"><use href="#folder-out"/></svg></button>
            <button aria-label="显示体"><svg class="ico"><use href="#cube-y"/></svg></button>
            <button aria-label="计算"><svg class="ico"><use href="#calc"/></svg></button>
            <button class="name-btn">名</button>
            <button aria-label="点位"><svg class="ico"><use href="#point"/></svg></button>
            <button aria-label="包容体"><svg class="ico"><use href="#cage"/></svg></button>
            <button aria-label="电极"><svg class="ico"><use href="#stamp"/></svg></button>
            <button aria-label="着色面"><svg class="ico"><use href="#stack-g"/></svg></button>
            <button aria-label="条纹"><svg class="ico"><use href="#stripes"/></svg></button>
            <button aria-label="节点"><svg class="ico"><use href="#nodes"/></svg></button>
            <button aria-label="文本"><svg class="ico"><use href="#text-edit"/></svg></button>
            <button aria-label="测量"><svg class="ico"><use href="#ruler"/></svg></button>
            <button aria-label="角度"><svg class="ico"><use href="#angle"/></svg></button>
            <button aria-label="网格"><svg class="ico"><use href="#grid-b"/></svg></button>
            <button aria-label="机床"><svg class="ico"><use href="#mach"/></svg></button>
            <button aria-label="图层设置"><svg class="ico"><use href="#layers-gear"/></svg></button>
            <button aria-label="移动至图层"><svg class="ico"><use href="#layers-in"/></svg></button>
            <button aria-label="复制至图层"><svg class="ico"><use href="#layers-copy"/></svg></button>
            <button aria-label="圆"><svg class="ico"><use href="#ring"/></svg></button>
            <button aria-label="测量体"><svg class="ico"><use href="#cube-p"/></svg></button>
            <button class="vert">简化装配</button>
            <i class="left-arrow"></i>
        </aside>

        <section class="stage">
            <div class="tabs">
                <button class="tab"><svg class="ico"><use href="#home"/></svg>欢迎页面</button>
                <button class="tab on"><svg class="ico"><use href="#sync"/></svg><span>_model1.prt</span><svg class="ico sm"><use href="#editdoc"/></svg><svg class="ico sm x"><use href="#close"/></svg></button>
            </div>
            <div class="view">
                <svg class="scene" viewBox="36 205 1114 812" width="1114" height="812">
                    <defs>
                        <linearGradient id="hole"><stop offset="0" stop-color="#3c3c3c"/><stop offset=".45" stop-color="#565656"/><stop offset="1" stop-color="#414141"/></linearGradient>
                    </defs>
                    <!-- part -->
                    <g stroke="#2e2e2e" stroke-width="1">
                        <path d="M1047 589L1007 758L989 852L1005 788L1037 656z" fill="#515151"/>
                        <path d="M657 653L728 669L723 694L1007 758L989 852L633 772z" fill="#4b4b4b"/>
                        <path d="M697 485L767 501L731 654L661 639z" fill="#9d9d9d"/>
                        <path d="M697 487L767 503" fill="none"/>
                        <path d="M661 639L731 654L728 669L657 653z" fill="#868686"/>
                        <path d="M763 526L1047 589L1007 758L723 694z" fill="#9d9d9d"/>
                        <path d="M763 526L728 669" stroke="#444" stroke-width="2"/>
                        <ellipse cx="830" cy="576" rx="24" ry="20" fill="url(#hole)"/>
                        <ellipse cx="795" cy="651" rx="21" ry="17" fill="url(#hole)"/>
                        <ellipse cx="942" cy="684" rx="24" ry="20" fill="url(#hole)"/>
                    </g>
                    <!-- coordinate systems -->
                    <g fill="none" stroke="#1212c8" stroke-width="1">
                        <path d="M870 550L934 564L922 616M866 565L929 579L922 616M849 603h14M856 597v13"/>
                        <path d="M950 624L975 630"/>
                    </g>
                    <path d="M856 603L880 504" stroke="#1030b0" stroke-width="2"/>
                    <path d="M866 565L873 524M874 522l2 14-5 2z" stroke="#2fae4a" fill="#2fae4a"/>
                    <path d="M856 603L866 556" stroke="#14508c" stroke-width="3"/>
                    <path d="M866 545l-4 14h7zM870 526l-4 14h8z" fill="#0c3aa0"/>
                    <path d="M881 498l-6 13 6 1z" fill="#1010d8"/>
                    <path d="M869 518h6l-7 9h6" stroke="#1010d8" fill="none"/>
                    <path d="M863 569l-7 20 7 2 3-7z" fill="#b00808"/>
                    <path d="M857 603L940 622" stroke="#c8303c" stroke-width="2"/>
                    <path d="M881 604l18 8-18 1z" fill="#e00c14"/>
                    <path d="M938 618l20 7-20 1z" fill="#d03a46"/>
                    <path d="M971 626l16 6-17 0z" fill="#1010d8"/>
                    <g class="axis">
                        <text x="878" y="496" fill="#1414d0">Y</text>
                        <text x="854" y="518" fill="#3da046">YM</text>
                        <text x="848" y="542" fill="#1e4ac0">ZM</text>
                        <text x="852" y="563" fill="#e01018">Y</text>
                        <text x="851" y="575" fill="#e01018">Z</text>
                        <text x="892" y="628" fill="#e01018">X</text>
                        <text x="941" y="641" fill="#c8404a">XM</text>
                        <text x="988" y="638" fill="#1414d0">X</text>
                    </g>
                    <!-- view triad -->
                    <path d="M128 875L169 885L156 942L115 933zM120 908L161 918" fill="none" stroke="#c4c4c4"/>
                    <path d="M155 850l2 15-5 9-3-2z" fill="#38b848"/>
                    <path d="M142 897l4-20-4-1 9-8 2 12-4-1-3 19z" fill="#0b2a94"/>
                    <path d="M163 911l32 7 0-3 18 9-19 1 0-3-32-7z" fill="#c82c3e"/>
                    <g class="axis">
                        <text x="153" y="847" fill="#3aa04a">Y</text>
                        <text x="147" y="865" fill="#2a58c0">Z</text>
                        <text x="218" y="931" fill="#b83040">X</text>
                    </g>
                </svg>
            </div>
        </section>

        <section class="navigator">
            <div class="nav-head">
                <i class="pin"></i>
                <h2>工序导航器 - 机床</h2>
                <button class="upload"><svg class="ico" viewBox="0 0 20 20"><circle cx="10" cy="6" r="4"/><circle cx="5" cy="13" r="4"/><circle cx="15" cy="13" r="4"/></svg><span>拖拽上传</span></button>
            </div>
            <div class="nav-table">
                <table>
                    <colgroup><col><col class="c-path"><col class="c-tool"><col class="c-desc"></colgroup>
                    <thead><tr><th>名称</th><th>刀轨</th><th>刀具</th><th>描述</th></tr></thead>
                    <tbody id="rows">
                        <tr><td>GENERIC_MACHINE</td><td></td><td></td><td>Gen</td></tr>
                        <tr><td><div class="node"><i class="minus"></i><svg class="folder" viewBox="0 0 14 12"><path d="M1 2h5l1 2h6v7H1z" fill="#f2e3a0" stroke="#8c7a28"/><path d="M7 5h4v5H7M8 7h3" stroke="#1a1a8c" stroke-width="1" fill="none"/></svg>未用项</div></td><td></td><td></td><td>mill</td></tr>
                    </tbody>
                </table>
                <div class="vscroll"><i class="chev up"></i><i class="thumb"></i><i class="chev down"></i></div>
            </div>
            <div class="hscroll"><i class="chev left"></i><i class="thumb"></i><i class="chev right"></i></div>
            <div class="splitter"></div>
            <button class="fold">相关性</button>
            <button class="fold">细节</button>
            <div class="watermark"><b>激活 Windows</b><span>转到“设置”以激活 Windows。</span></div>
        </section>

        <aside class="res-bar">
            <button class="first" aria-label="设置"><svg class="ico"><use href="#gear"/></svg></button>
            <button class="gap" aria-label="装配导航器"><svg class="ico"><use href="#asm"/></svg></button>
            <button aria-label="约束导航器"><svg class="ico"><use href="#asm-o"/></svg></button>
            <button aria-label="部件导航器"><svg class="ico"><use href="#part"/></svg></button>
            <button class="on" aria-label="工序导航器"><svg class="ico"><use href="#opnav"/></svg></button>
            <button aria-label="机床导航器"><svg class="ico"><use href="#cnc"/></svg></button>
            <button aria-label="重用库"><svg class="ico"><use href="#book"/></svg></button>
            <button aria-label="加工特征"><svg class="ico"><use href="#chain"/></svg></button>
            <button aria-label="视图管理器"><svg class="ico"><use href="#mesh"/></svg></button>
            <button class="gap" aria-label="HD3D 工具"><svg class="ico"><use href="#infob"/></svg></button>
            <button class="gap" aria-label="浏览器"><svg class="ico"><use href="#web"/></svg></button>
            <button class="gap" aria-label="历史记录"><svg class="ico"><use href="#clock"/></svg></button>
            <button aria-label="可视化"><svg class="ico"><use href="#color-wand"/></svg></button>
            <button aria-label="加工向导"><svg class="ico"><use href="#op-wand"/></svg></button>
            <button aria-label="工具箱"><svg class="ico"><use href="#toolbox"/></svg></button>
            <button aria-label="打开机床"><svg class="ico"><use href="#cnc-open"/></svg></button>
        </aside>
    </main>

    <div class="status">选择类型、位置、组，并指定刀具名或从库中调用刀具</div>

    <section class="dialog">
        <header>
            <svg class="ico"><use href="#gear"/></svg>
            <h2>创建刀具</h2>
            <button aria-label="帮助">?</button>
            <button aria-label="关闭"><svg class="ico"><use href="#close"/></svg></button>
        </header>
        <div class="tool-list"><div class="tool-grid" id="toolGrid"></div></div>
    </section>
    <svg class="cursor" viewBox="0 0 12 28"><path d="M6 1l4 6H7v14h3l-4 6-4-6h3V7H2z" fill="#fff" stroke="#222"/></svg>

    <footer class="taskbar">
        <button aria-label="开始"><svg viewBox="0 0 24 24"><path d="M4 6l7-1v7H4zM12 5l8-1v8h-8zM4 13h7v7l-7-1zM12 13h8v8l-8-1z" fill="#fff"/></svg></button>
        <button aria-label="搜索"><svg viewBox="0 0 24 24"><circle cx="14" cy="9" r="6" fill="none" stroke="#fff"/><path d="M10 14l-6 6" stroke="#fff" stroke-width="2"/></svg></button>
        <button class="run" aria-label="安全卫士"><svg viewBox="0 0 24 24"><path d="M12 0c3 2 7 3 11 3 0 9-3 16-11 21C4 19 1 12 1 3c4 0 8-1 11-3z" fill="#e4ecf2"/><path d="M12 2c3 2 6 3 9 3 0 7-3 13-9 17C6 18 3 12 3 5c3 0 6-1 9-3z" fill="#14639a"/><path d="M17 6l-9 3c-2 2 0 4 4 5M7 17l9-3c2-2 0-4-4-5" fill="none" stroke="#cfe6f4" stroke-width="2"/></svg></button>
        <button aria-label="此电脑"><svg viewBox="0 0 24 24"><path d="M8 1l15 4v12L9 14z" fill="#5cc2f2"/><path d="M8 1l15 4-13 8z" fill="#8ad8f8"/><path d="M10 15l5 2-3 2-4-2zM1 19l8-1 8 3-9 3z" fill="#dce2e6"/></svg></button>
        <button class="run multi" aria-label="资源管理器"><svg viewBox="0 0 24 24"><path d="M1 2h9l2 3h11v17H1z" fill="#d9a520"/><path d="M1 6h22v16H1z" fill="#f8d564"/><path d="M5 22v-9h14v9h-4v-4H9v4z" fill="#3a96d4"/></svg></button>
        <button class="run multi" aria-label="WPS"><svg viewBox="0 0 24 24"><rect x="1" y="1" width="22" height="22" rx="3" fill="#2f7de8"/><path d="M5 8l4 9 3-7 3 7 4-9M8 8h11" fill="none" stroke="#fff" stroke-width="2"/></svg></button>
        <button class="run" aria-label="OBS"><svg viewBox="0 0 24 24"><circle cx="12" cy="12" r="11" fill="#2a2728" stroke="#d8d8d8"/><path d="M11 4c-4 4-1 7 1 8M19 15c-5 1-6-1-7-3M6 18c4 0 6-3 6-6" fill="none" stroke="#c8c8c8" stroke-width="2"/></svg></button>
        <button class="run multi" aria-label="Edge"><svg viewBox="0 0 24 24"><path d="M2 11C3 4 7 2 12 2c7 0 10 5 10 11H9c0 6 7 6 12 3v5C13 25 4 23 4 15c0-4 3-7 6-8-1 1-1 2-1 3h7c0-5-8-6-14 1z" fill="#1482d8"/></svg></button>
        <button class="run active" aria-label="NX"><svg viewBox="0 0 24 24"><path d="M1 4h5v16h15v3H1z" fill="#1f9c8c"/><path d="M4 0h20v20H4z" fill="#86060e"/><text x="6" y="16" class="nx">NX</text></svg></button>
        <div class="tray">
            <svg viewBox="0 0 18 18"><path d="M3 12l6-6 6 6" fill="none" stroke="#fff"/></svg>
            <svg viewBox="0 0 18 18"><rect x="6" y="1" width="6" height="11" rx="2" fill="#fff"/><path d="M4 9c0 7 10 7 10 0M9 14v2M5 17h8" fill="none" stroke="#fff"/></svg>
            <svg viewBox="0 0 18 18"><ellipse cx="8" cy="9" rx="6" ry="8" fill="#111"/><ellipse cx="8" cy="12" rx="3" ry="5" fill="#fff"/><path d="M2 8h11v2H2z" fill="#d8202c"/><circle cx="6" cy="4" r="1" fill="#fff"/><circle cx="10" cy="4" r="1" fill="#fff"/><rect x="9" y="9" width="9" height="7" fill="#f6bd3c"/></svg>
            <svg viewBox="0 0 18 18"><path d="M9 0l8 5-8 5-8-5z" fill="#3d9be8"/><path d="M1 6l8 5 8-5v8l-8 4-8-4z" fill="#e8f0f8"/><rect x="5" y="10" width="13" height="8" rx="1" fill="#f6b21c"/><path d="M8 14h1M11 14h1M14 14h1" stroke="#333" stroke-width="2"/></svg>
            <svg viewBox="0 0 18 18"><path d="M5 4h12v9H5M8 16h6M11 13v3M1 2h4v4H1zM3 6v6h2" fill="none" stroke="#fff"/></svg>
            <svg viewBox="0 0 18 18"><path d="M1 7h3l4-4v12l-4-4H1zM10 7c1 1 1 3 0 4M12 5c2 2 2 6 0 8" fill="none" stroke="#fff"/><path d="M14 3c3 3 3 9 0 12" fill="none" stroke="#8a96a4"/></svg>
            <span class="ime">中</span>
            <time>13:11<br>2021/9/8</time>
            <div class="notice"><svg viewBox="0 0 20 20"><path d="M1 1h18v13H9l-4 4v-4H1z" fill="#fff"/><path d="M4 5h12M4 8h12M4 11h8" stroke="#1c2740"/></svg><b>20</b></div>
        </div>
    </footer>

    <script src="script.js"></script>
</body>
</html>
```
FILE: script.js
```
const cutters = [
    'C1.5', 'C10', 'C12', 'C2', 'C3', 'C4', 'C6', 'C8',
    'D1', 'D1.5', 'D10', 'D12', 'D2', 'D3', 'D4', 'D6', 'D8',
    'DJ10', 'DJ8', 'DJ6', 'DJ4', 'DJ3',
    'D63R6', 'D50R6', 'D35R5', 'D30R5',
    'D63R0.8', 'D50R0.8', 'D35R0.8', 'D26R0.8', 'D21R0.8', 'D17R0.8', 'D16R0.8', 'D13R0.8'
];

// tree rows of the operation navigator
const rows = document.getElementById('rows');
cutters.forEach(name => {
    const desc = name.startsWith('DJ') ? '涓?' : 'Mil';
    const tr = document.createElement('tr');
    tr.innerHTML = `<td><div class="node leaf"><i class="branch"></i><i class="bit"></i>${name}</div></td><td></td><td></td><td>${desc}</td>`;
    rows.appendChild(tr);
});

// tool buttons: mills first, then drills, mills again at the end
const grid = document.getElementById('toolGrid');
for (let i = 0; i < 145; i++) {
    const kind = i < 18 || i >= 140 ? 'mill' : 'drill';
    const b = document.createElement('button');
    b.setAttribute('aria-label', kind === 'mill' ? '铣刀' : '钻头');
    b.innerHTML = `<svg class="ico"><use href="#${kind}"/></svg>`;
    grid.appendChild(b);
}
```
FILE: styles.css
```
* {
    box-sizing: border-box;
}
body {
    margin: 0;
    height: 100vh;
    display: flex;
    flex-direction: column;
    position: relative;
    overflow: hidden;
    background: #fff;
    color: #222;
    font-family: "Open Sans", "Noto Sans CJK SC", sans-serif;
    font-size: 12px;
    line-height: 16px;
}
button {
    padding: 0;
    border: 0;
    background: none;
    color: inherit;
    font: inherit;
}
h1, h2 {
    margin: 0;
    font-weight: normal;
}
.sprite {
    position: absolute;
    width: 0;
    height: 0;
}
.ico {
    display: block;
    flex: none;
    width: 18px;
    height: 18px;
    fill: none;
    stroke: #4a4a4a;
    stroke-width: 1;
}
.arrow {
    display: inline-block;
    flex: none;
    border: 3px solid transparent;
    border-top: 4px solid #222;
    border-bottom: 0;
}
.arrow.light {
    border-top-color: #fff;
}

/* header */
.app-head {
    flex: none;
    color: #fff;
    background: linear-gradient(90deg, #0b6b83, #1f7a90 35%, #328a9e 85%, #378ea1);
}
.app-head .ico {
    width: 20px;
    height: 20px;
    stroke: #fff;
}
.title-bar {
    display: flex;
    align-items: center;
    height: 26px;
    padding: 0 3px;
}
.brand {
    width: 94px;
    font-size: 22px;
    font-weight: bold;
    line-height: 26px;
    white-space: nowrap;
}
.tsep {
    width: 1px;
    height: 22px;
    margin: 0 3px;
    background: #0a5268;
}
.tb {
    display: flex;
    align-items: center;
    margin: 0 2px;
}
.tb.dim {
    opacity: .3;
}
.tb.win {
    gap: 2px;
    font-size: 11px;
}
.tb + .arrow {
    margin-left: 4px;
}
.over {
    margin-left: 8px;
}
.title {
    margin-left: auto;
    padding-left: 4px;
    font-size: 13px;
}
.siemens {
    margin-left: auto;
    font-weight: 800;
    font-size: 14px;
}
.siemens + .wc {
    margin-left: 22px;
}
.wc {
    margin: 0 3px;
}
.app-head .wc .ico {
    width: 18px;
    height: 18px;
}
.menu-bar {
    display: flex;
    height: 30px;
    padding-left: 4px;
    font-size: 13px;
}
.menu-bar a {
    padding: 7px 16px 0;
    color: #fff;
    text-decoration: none;
    border-bottom: 3px solid transparent;
}
.menu-bar .file {
    padding-right: 25px;
}
.menu-bar .on {
    color: #f2cf56;
    border-bottom-color: #e8c84e;
}
.menu-right {
    display: flex;
    align-items: center;
    gap: 2px;
    margin-left: auto;
    padding-right: 7px;
    font-size: 11px;
}
.search {
    display: flex;
    align-items: center;
    width: 128px;
    height: 22px;
    margin-right: 5px;
    border: 1px solid #6c7c80;
    background: #fff;
}
.search input {
    flex: 1;
    min-width: 0;
    padding: 0;
    border: 0;
    background: none;
    font: inherit;
}
.search input::placeholder {
    color: #999;
}
.search .ico {
    stroke: #333;
}
.tut {
    gap: 2px;
}
.dot {
    width: 13px;
    height: 14px;
    margin-left: 8px;
    border-radius: 50%;
    background: #85878a;
}

/* ribbon */
.ribbon {
    display: flex;
    flex: none;
    height: 94px;
    border-bottom: 1px solid #d4d4d4;
    font-size: 11px;
}
.group {
    display: flex;
    flex-direction: column;
    flex: none;
    margin-top: 5px;
    border-right: 1px solid #d8d8d8;
}
.items {
    display: flex;
    flex: 1;
}
.big {
    display: flex;
    flex-direction: column;
    align-items: center;
    min-width: 44px;
    padding: 0 4px;
    line-height: 16px;
}
.big .ico {
    width: 32px;
    height: 32px;
    margin-bottom: 4px;
}
.big .arrow {
    margin-top: 4px;
}
.narrow {
    min-width: 38px;
}
.wide {
    padding: 0 6px;
}
.more {
    margin-left: 4px;
}
.caption {
    display: flex;
    align-items: center;
    height: 18px;
    padding-right: 8px;
    color: #0e6576;
}
.caption span {
    flex: 1;
    text-align: center;
    white-space: nowrap;
}
.g-util {
    width: 704px;
    padding-left: 9px;
}
.g-util .caption span {
    padding-right: 12px;
}
.g-delay {
    width: 220px;
}
.rows {
    display: grid;
    grid-template-columns: 104px 96px;
    grid-template-rows: 34px 34px;
    padding-left: 12px;
}
.mid, .small {
    display: flex;
    align-items: center;
    gap: 4px;
    white-space: nowrap;
}
.mid .ico {
    width: 24px;
    height: 24px;
}
.g-film {
    width: 126px;
}
.film {
    flex-direction: column;
    padding: 0 5px 0 7px;
}
.line {
    display: flex;
    justify-content: space-between;
    height: 30px;
}
.small:disabled {
    color: #b8b8b8;
}
.small:disabled .ico {
    opacity: .35;
}
.small {
    gap: 2px;
}
.g-check {
    width: 114px;
}
.g-check .items {
    padding-left: 8px;
}
.pair {
    display: flex;
    flex-direction: column;
    gap: 5px;
    padding-left: 4px;
}
.g-reuse {
    width: 121px;
}
.g-reuse .items {
    justify-content: space-between;
    padding: 0 2px 0 9px;
}
.g-req {
    width: 67px;
}
.g-play {
    width: 55px;
}
.g-know {
    width: 67px;
}
.g-req .items, .g-play .items, .g-know .items {
    justify-content: center;
}
.g-play .caption, .g-know .caption, .g-req .caption {
    padding-right: 6px;
}
.g-lib {
    width: 114px;
    padding: 8px 0 0 3px;
}
.ribbon-end {
    align-self: flex-end;
    margin: 0 5px 7px auto;
}

/* selection filter bar */
.filter-bar {
    display: flex;
    align-items: center;
    flex: none;
    height: 29px;
    padding-left: 12px;
    border-bottom: 1px solid #a8a8a8;
    font-size: 11px;
}
.fmenu, .ftext, .fgroup {
    display: flex;
    align-items: center;
}
.fmenu .arrow {
    margin-left: 6px;
}
.fmenu {
    font-size: 12px;
}
.burger {
    width: 11px;
    height: 9px;
    margin-right: 6px;
    border-top: 1px solid #333;
    border-bottom: 1px solid #333;
    background: linear-gradient(#333, #333) center / 100% 1px no-repeat;
}
.fsep {
    width: 1px;
    height: 21px;
    margin: 0 8px;
    background: #d0d0d0;
}
.pick {
    position: relative;
    margin-left: 4px;
}
.pick select {
    display: block;
    width: 150px;
    height: 23px;
    padding: 0 2px;
    border: 1px solid #b8b8b8;
    border-radius: 0;
    background: #f4f4f4;
    color: #a4a4a4;
    font: inherit;
    opacity: 1;
    appearance: none;
}
.pick::after {
    content: "";
    position: absolute;
    right: 5px;
    top: 10px;
    border: 4px solid transparent;
    border-top-color: #999;
}
.fb {
    display: flex;
    align-items: center;
    justify-content: center;
    width: 24px;
    height: 23px;
}
.feats .fb {
    width: 25px;
}
.fb.dim {
    opacity: .45;
}
.fb.on {
    background: #c9e7ec;
}
.pick + .fb {
    margin: 0 4px;
}
.ftext {
    gap: 3px;
    margin-left: 8px;
}
.ftext .arrow {
    margin-left: 4px;
}
.wcs {
    margin: 0 0 0 6px;
    font-size: 12px;
}
.wcs .arrow {
    margin-left: 0;
}
.snaps {
    margin-left: 4px;
}
.snaps .arrow, .fgroup > .arrow {
    margin: 0 5px;
}
.filter-bar .ribbon-end {
    margin-bottom: 7px;
}

/* work area */
.work {
    display: flex;
    flex: 1;
    min-height: 0;
}
.left-bar {
    display: flex;
    flex-direction: column;
    align-items: center;
    flex: none;
    width: 36px;
    padding: 6px 2px 0 0;
    background: #fff;
}
.left-bar button {
    display: flex;
    align-items: center;
    justify-content: center;
    width: 30px;
    height: 32px;
}
.left-bar .ico, .res-bar .ico {
    width: 24px;
    height: 24px;
}
.left-bar .name-btn {
    padding: 0 0 4px 6px;
    color: #1010e0;
    font-size: 18px;
    font-weight: 900;
}
.text-ico {
    fill: #6a2a9c;
    stroke: none;
    font: bold 12px "Liberation Serif", serif;
}
.left-bar .vert {
    width: 28px;
    height: 54px;
    writing-mode: vertical-rl;
    text-orientation: sideways;
    font-size: 11px;
    border-bottom: 1px solid #ccc;
}
.left-arrow {
    align-self: flex-start;
    margin: auto 0 4px 7px;
    border: 4px solid transparent;
    border-right-color: #222;
    border-left: 0;
}
.stage {
    display: flex;
    flex: 1;
    flex-direction: column;
    min-width: 0;
}
.tabs {
    display: flex;
    flex: none;
    height: 26px;
    border-bottom: 2px solid #1c5f75;
}
.tab {
    display: flex;
    align-items: center;
    gap: 3px;
    width: 95px;
    padding-left: 4px;
}
.tab.on {
    width: 133px;
    padding-left: 5px;
    color: #fff;
    background: #0a6484;
}
.tab.on .ico {
    stroke: #fff;
}
.tab .sm {
    width: 12px;
    height: 12px;
    margin-left: 3px;
}
.tab .x {
    margin-left: 2px;
    opacity: .8;
}
.view {
    flex: 1;
    min-height: 0;
    overflow: hidden;
    background: linear-gradient(#232425, #464749 55%, #555658 72%, #545557);
}
.scene {
    display: block;
}
.axis {
    font-family: "Liberation Sans", sans-serif;
    font-size: 13px;
}

/* operation navigator */
.navigator {
    display: flex;
    flex-direction: column;
    flex: none;
    position: relative;
    width: 410px;
    padding: 0 7px 6px 9px;
    border-left: 1px solid #a8a8a8;
}
.nav-head {
    display: flex;
    align-items: center;
    flex: none;
    height: 29px;
    padding-left: 3px;
}
.pin {
    width: 12px;
    height: 11px;
    margin-right: 11px;
    border: 1px solid #222;
    border-top-width: 2px;
}
.nav-head h2 {
    font-size: 12px;
}
.upload {
    display: flex;
    align-items: center;
    width: 104px;
    height: 25px;
    margin-left: auto;
    border: 1px solid #3b9be4;
    border-radius: 3px;
    background: #d4effd;
    color: #5cb8ee;
    overflow: hidden;
}
.upload .ico {
    width: 29px;
    height: 25px;
    padding: 3px;
    background: #2ba0f6;
    stroke: #fff;
    stroke-width: 2;
}
.upload span {
    flex: 1;
}
.nav-table {
    flex: 1;
    min-height: 0;
    position: relative;
    overflow: hidden;
    border: 1px solid #d4d4d4;
    border-bottom: 0;
}
table {
    width: 100%;
    table-layout: fixed;
    border-collapse: separate;
    border-spacing: 0;
}
.c-path {
    width: 50px;
}
.c-tool {
    width: 100px;
}
.c-desc {
    width: 40px;
}
th {
    height: 21px;
    padding: 0 6px;
    border-right: 1px solid #d0d0d0;
    background: #efefef;
    font-weight: normal;
    text-align: left;
}
td {
    height: 20px;
    padding: 0 4px;
    border-right: 1px solid #e2e2e2;
    border-bottom: 1px solid #e8e8e8;
    line-height: 19px;
    white-space: nowrap;
    overflow: hidden;
}
td:first-child {
    border-right-color: #000;
}
th:last-child, td:last-child {
    border-right: 0;
}
tbody tr:nth-child(even) {
    background: #fafafa;
}
.node {
    display: flex;
    align-items: center;
    height: 19px;
    padding-left: 2px;
}
.minus {
    width: 9px;
    height: 9px;
    margin-right: 6px;
    border: 1px solid #ccc;
    background: linear-gradient(#222, #222) center / 5px 1px no-repeat;
}
.folder {
    width: 14px;
    height: 13px;
    margin-right: 4px;
}
.leaf {
    padding-left: 25px;
}
.branch {
    width: 9px;
    height: 20px;
    border-left: 1px dotted #999;
    display: flex;
    align-items: center;
}
.branch::after {
    content: "";
    width: 100%;
    border-bottom: 1px dotted #999;
}
.bit {
    width: 7px;
    height: 13px;
    margin: 0 7px 0 6px;
    border-left: 2px dotted #8a90dc;
    border-right: 2px solid #3a3a8c;
    background: repeating-linear-gradient(#5c5cb8 0 2px, #a4a8ea 2px 4px);
}
.vscroll {
    position: absolute;
    top: 21px;
    right: 0;
    bottom: 0;
    width: 16px;
    display: flex;
    flex-direction: column;
    align-items: center;
    background: #f0f0f0;
}
.vscroll .thumb {
    width: 15px;
    height: 121px;
    background: #cdcdcd;
}
.chev {
    width: 6px;
    height: 6px;
    border-top: 2px solid #555;
    border-left: 2px solid #555;
}
.chev.up {
    margin: 8px 0 3px;
    transform: rotate(45deg);
}
.chev.down {
    margin: auto 0 7px;
    transform: rotate(225deg);
}
.chev.left {
    margin: 0 4px 0 8px;
    transform: rotate(-45deg);
}
.chev.right {
    margin: 0 24px 0 auto;
    transform: rotate(135deg);
}
.hscroll {
    display: flex;
    align-items: center;
    flex: none;
    height: 18px;
    border: 1px solid #d4d4d4;
    border-top: 0;
    background: #f0f0f0;
}
.hscroll .thumb {
    width: 140px;
    height: 15px;
    background: #cdcdcd;
}
.splitter {
    flex: none;
    height: 5px;
    border: 1px solid #a4a4a4;
    background: #d8d8d8;
}
.fold {
    flex: none;
    height: 24px;
    padding-top: 2px;
    border-bottom: 2px solid #d0d0d0;
    color: #0e6576;
    font-size: 14px;
    text-align: left;
}
.fold::before {
    content: "";
    display: inline-block;
    margin: 0 9px;
    border: 5px solid transparent;
    border-left-color: #0e6576;
    border-right: 0;
}
.watermark {
    position: absolute;
    left: 152px;
    bottom: 25px;
    display: flex;
    flex-direction: column;
    color: #b0b0b0;
    font-size: 15px;
    line-height: 24px;
    pointer-events: none;
}
.watermark b {
    font-size: 20px;
    font-weight: normal;
}

/* resource bar */
.res-bar {
    display: flex;
    flex-direction: column;
    flex: none;
    width: 32px;
    border-left: 1px solid #a8a8a8;
    background: #dadada;
}
.res-bar button {
    display: flex;
    flex: none;
    align-items: center;
    width: 29px;
    height: 42px;
    padding-left: 1px;
}
.res-bar .first {
    height: 28px;
    justify-content: center;
}
.res-bar .first .ico {
    width: 16px;
    height: 16px;
    stroke: #222;
}
.res-bar .gap {
    margin-top: 12px;
}
.res-bar .first + .gap {
    margin-top: 14px;
}
.res-bar .on {
    height: 45px;
    margin-bottom: -3px;
    background: #fff;
    border: 1px solid #a8a8a8;
    border-left: 0;
}

.status {
    flex: none;
    height: 22px;
    padding-left: 3px;
    border-top: 1px solid #a8a8a8;
    font-size: 11px;
    font-weight: 500;
    line-height: 20px;
    color: #000;
}

/* floating tool dialog */
.dialog {
    position: absolute;
    top: 149px;
    right: 442px;
    bottom: 40px;
    width: 328px;
    display: flex;
    flex-direction: column;
    border: 1px solid #d8d8d8;
    border-top: 0;
    background: #f0f0f0;
}
.dialog header {
    display: flex;
    align-items: center;
    flex: none;
    height: 24px;
    padding: 0 6px;
    background: #096584;
    color: #fff;
}
.dialog header .ico {
    width: 16px;
    height: 16px;
    stroke: #fff;
}
.dialog h2 {
    flex: 1;
    margin-left: 6px;
    font-size: 14px;
}
.dialog header button {
    margin-left: 12px;
    font-size: 16px;
    font-weight: bold;
}
.tool-list {
    flex: 1;
    min-height: 0;
    margin: 4px 5px 43px;
    overflow: hidden;
    background: #fff;
}
.tool-grid {
    display: grid;
    grid-template-columns: repeat(6, 34px);
    grid-auto-rows: 34px;
    margin: -26px 0 0 56px;
}
.tool-grid button {
    display: flex;
    align-items: center;
    justify-content: center;
}
.tool-grid .ico {
    width: 24px;
    height: 24px;
    shape-rendering: crispEdges;
}
.cursor {
    position: absolute;
    top: 154px;
    right: 584px;
    width: 12px;
    height: 28px;
}

/* taskbar */
.taskbar {
    display: flex;
    flex: none;
    gap: 1px;
    height: 40px;
    background: linear-gradient(90deg, #24383f, #1f3040 60%, #1a2540);
    color: #fff;
}
.taskbar > button {
    display: flex;
    align-items: center;
    justify-content: center;
    width: 48px;
    border-bottom: 2px solid transparent;
}
.taskbar > button svg {
    width: 24px;
    height: 24px;
}
.taskbar .run {
    background: linear-gradient(#76b9ed, #76b9ed) center bottom / 40px 2px no-repeat border-box;
}
.taskbar .multi {
    background: linear-gradient(90deg, #76b9ed 32px, #4f7f9f 32px) center bottom / 40px 2px no-repeat border-box;
}
.taskbar .active {
    background-color: #53656b;
    background-size: 48px 2px;
}
.nx {
    fill: #fff;
    font-size: 11px;
    font-weight: bold;
}
.tray {
    display: flex;
    align-items: center;
    gap: 6px;
    margin-left: auto;
    padding-right: 18px;
}
.tray svg {
    width: 18px;
    height: 18px;
}
.ime {
    font-size: 15px;
}
.tray time {
    width: 74px;
    font-size: 12px;
    line-height: 19px;
    text-align: center;
}
.notice {
    position: relative;
    display: flex;
    width: 28px;
    justify-content: center;
}
.notice b {
    position: absolute;
    left: 10px;
    top: 6px;
    width: 21px;
    border: 1px solid #8a929c;
    border-radius: 8px;
    background: #3c4654;
    font-size: 11px;
    line-height: 14px;
    text-align: center;
}
```
